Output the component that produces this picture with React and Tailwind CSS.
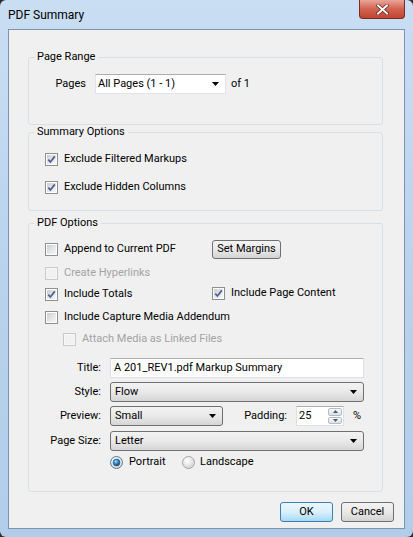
import React from "react";

const Check = ({ checked, disabled }) => (
  <span
    className={`flex h-[13px] w-[13px] shrink-0 items-center justify-center border p-[1px] ${
      disabled ? "border-[#c9c9c9] bg-[#f7f7f7]" : "border-[#8e8f8f] bg-white"
    }`}
  >
    <span
      className={`relative flex h-full w-full items-center justify-center ${
        disabled ? "bg-[#f1f1f1]" : "bg-gradient-to-br from-[#c9ccd1] via-[#e4e5e7] to-[#f7f7f7]"
      }`}
    >
      {checked && (
        <svg width="11" height="11" viewBox="0 0 11 11" className="absolute -left-[1px] -top-[1px]">
          <path d="M2.3 5.6 L4.4 8 L8.8 2.4" fill="none" stroke="#4c5f8e" strokeWidth="1.7" />
        </svg>
      )}
    </span>
  </span>
);

const CheckRow = ({ label, checked, disabled, className = "" }) => (
  <div className={`flex h-[20px] items-center gap-[6px] ${className}`}>
    <Check checked={checked} disabled={disabled} />
    <span className={disabled ? "text-[#a3a3a3]" : "text-black"}>{label}</span>
  </div>
);

const Arrow = () => (
  <svg width="7" height="4" viewBox="0 0 7 4" className="shrink-0">
    <path d="M0 0 H7 L3.5 4 Z" fill="#000" />
  </svg>
);

const Combo = ({ value, className = "" }) => (
  <div
    className={`flex h-[20px] items-center justify-between rounded-[3px] border border-[#707070] bg-gradient-to-b from-[#f3f3f3] via-[#e9e9e9] to-[#d6d6d6] pl-[4px] pr-[6px] ${className}`}
  >
    <span>{value}</span>
    <Arrow />
  </div>
);

const Radio = ({ checked }) => (
  <svg width="13" height="13" viewBox="0 0 13 13" className="shrink-0">
    <defs>
      <radialGradient id="rOff" cx="40%" cy="35%" r="70%">
        <stop offset="0" stopColor="#ffffff" />
        <stop offset="1" stopColor="#cfd2d6" />
      </radialGradient>
      <radialGradient id="rDot" cx="40%" cy="35%" r="70%">
        <stop offset="0" stopColor="#a6dcf7" />
        <stop offset="0.5" stopColor="#2d87c6" />
        <stop offset="1" stopColor="#0f3f73" />
      </radialGradient>
    </defs>
    <circle cx="6.5" cy="6.5" r="6" fill="url(#rOff)" stroke={checked ? "#5a7a96" : "#a2a5a9"} />
    {checked && <circle cx="6.5" cy="6.5" r="3.4" fill="url(#rDot)" stroke="#1d4a74" strokeWidth="0.6" />}
  </svg>
);

const Button = ({ children, primary, className = "" }) => (
  <div
    className={`flex items-center justify-center rounded-[3px] border bg-gradient-to-b ${
      primary
        ? "border-[#3c7fb1] from-[#eaf6fd] via-[#d9f0fc] to-[#a7d9f5]"
        : "border-[#707070] from-[#f3f3f3] via-[#e9e9e9] to-[#d3d3d3]"
    } ${className}`}
  >
    {children}
  </div>
);

const Legend = ({ children }) => (
  <legend className="ml-[5px] px-[3px] leading-[14px] text-black">{children}</legend>
);

const LabelCell = ({ children }) => (
  <span className="w-[72px] shrink-0 pr-0 text-right">{children}</span>
);

export default function App() {
  return (
    <div className="h-[537px] w-[413px] bg-[#2a2a2a] font-['Roboto',sans-serif] text-[11px] text-black">
      <div className="flex h-full w-full flex-col rounded-[6px] bg-gradient-to-b from-[#c9def3] via-[#b9d3ee] to-[#b2cdea] px-[8px] pb-[8px]">
        {/* title bar */}
        <div className="flex h-[29px] shrink-0 items-start justify-between">
          <span className="mt-[7px] text-[12px] leading-[16px] text-black">PDF Summary</span>
          <div className="flex h-[19px] w-[46px] items-center justify-center rounded-b-[4px] border border-t-0 border-[#7a2b22] bg-gradient-to-b from-[#e7a699] via-[#d2614f] to-[#c24430]">
            <svg width="13" height="11" viewBox="0 0 13 11">
              <path d="M2 1.5 L11 9.5 M11 1.5 L2 9.5" stroke="#5a1f18" strokeWidth="3.4" strokeLinecap="square" />
              <path d="M2 1.5 L11 9.5 M11 1.5 L2 9.5" stroke="#ffffff" strokeWidth="2" strokeLinecap="square" />
            </svg>
          </div>
        </div>

        {/* client area */}
        <div className="flex flex-1 flex-col border border-[#7f93ab] bg-[#f0f0f0]">
          {/* Page Range */}
          <fieldset className="ml-[19px] mt-[20px] h-[75px] w-[355px] rounded-[3px] border border-[#d5dfe5]">
            <Legend>Page Range</Legend>
            <div className="mt-[10px] flex h-[20px] items-center">
              <span className="w-[66px] pr-[9px] text-right">Pages</span>
              <div className="flex h-[20px] w-[131px] items-center justify-between border border-[#e2e3ea] border-t-[#abadb3] bg-white pl-[2px] pr-[6px]">
                <span>All Pages (1 - 1)</span>
                <Arrow />
              </div>
              <span className="ml-[5px]">of 1</span>
            </div>
          </fieldset>

          {/* Summary Options */}
          <fieldset className="ml-[19px] h-[86px] w-[355px] rounded-[3px] border border-[#d5dfe5]">
            <Legend>Summary Options</Legend>
            <div className="flex flex-col gap-[8px] pl-[16px] pt-[10px]">
              <CheckRow label="Exclude Filtered Markups" checked />
              <CheckRow label="Exclude Hidden Columns" checked />
            </div>
          </fieldset>

          {/* PDF Options */}
          <fieldset className="ml-[19px] mt-[5px] h-[276px] w-[355px] rounded-[3px] border border-[#d5dfe5]">
            <Legend>PDF Options</Legend>
            <div className="flex flex-col pt-[8px]">
              <div className="flex h-[22px] items-center pl-[16px]">
                <CheckRow label="Append to Current PDF" className="w-[167px]" />
                <Button className="h-[19px] w-[69px]">Set Margins</Button>
              </div>
              <CheckRow label="Create Hyperlinks" disabled className="mt-[3px] pl-[16px]" />
              <div className="mt-[1px] flex h-[20px] items-center pl-[16px]">
                <CheckRow label="Include Totals" checked className="w-[167px]" />
                <CheckRow label="Include Page Content" checked className="-mt-[2px]" />
              </div>
              <CheckRow label="Include Capture Media Addendum" className="mt-[3px] pl-[16px]" />
              <CheckRow label="Attach Media as Linked Files" disabled className="mt-[2px] pl-[34px]" />

              <div className="mt-[9px] flex h-[20px] items-center gap-[9px]">
                <LabelCell>Title:</LabelCell>
                <div className="flex h-[20px] w-[254px] items-center border border-[#dbdfe6] border-t-[#abadb3] bg-white px-[3px]">
                  A 201_REV1.pdf Markup Summary
                </div>
              </div>

              <div className="mt-[4px] flex h-[20px] items-center gap-[9px]">
                <LabelCell>Style:</LabelCell>
                <Combo value="Flow" className="w-[254px]" />
              </div>

              <div className="mt-[4px] flex h-[20px] items-center">
                <LabelCell>Preview:</LabelCell>
                <Combo value="Small" className="ml-[9px] w-[113px]" />
                <span className="w-[64px] text-right">Padding:</span>
                <div className="ml-[9px] flex h-[20px] w-[48px] items-stretch border border-[#dbdfe6] border-t-[#abadb3] bg-white">
                  <span className="flex flex-1 items-center pl-[2px]">25</span>
                  <div className="my-[1px] mr-[1px] flex w-[14px] flex-col gap-[1px]">
                    <div className="flex flex-1 items-center justify-center rounded-[2px] border border-[#b3bbc6] bg-gradient-to-b from-[#f6f7f9] to-[#dde2e8]">
                      <svg width="5" height="3" viewBox="0 0 5 3">
                        <path d="M0 3 H5 L2.5 0 Z" fill="#4d5a6b" />
                      </svg>
                    </div>
                    <div className="flex flex-1 items-center justify-center rounded-[2px] border border-[#b3bbc6] bg-gradient-to-b from-[#f6f7f9] to-[#dde2e8]">
                      <svg width="5" height="3" viewBox="0 0 5 3">
                        <path d="M0 0 H5 L2.5 3 Z" fill="#4d5a6b" />
                      </svg>
                    </div>
                  </div>
                </div>
                <span className="ml-[9px]">%</span>
              </div>

              <div className="mt-[5px] flex h-[20px] items-center gap-[9px]">
                <LabelCell>Page Size:</LabelCell>
                <Combo value="Letter" className="w-[254px]" />
              </div>

              <div className="mt-[3px] flex h-[16px] items-center pl-[81px]">
                <div className="flex w-[72px] items-center gap-[6px]">
                  <Radio checked />
                  <span>Portrait</span>
                </div>
                <div className="flex items-center gap-[5px]">
                  <Radio />
                  <span>Landscape</span>
                </div>
              </div>
            </div>
          </fieldset>

          {/* buttons */}
          <div className="mt-[10px] flex justify-end gap-[8px] pr-[10px]">
            <Button primary className="h-[20px] w-[53px]">OK</Button>
            <Button className="h-[20px] w-[53px]">Cancel</Button>
          </div>
        </div>
      </div>
    </div>
  );
}
